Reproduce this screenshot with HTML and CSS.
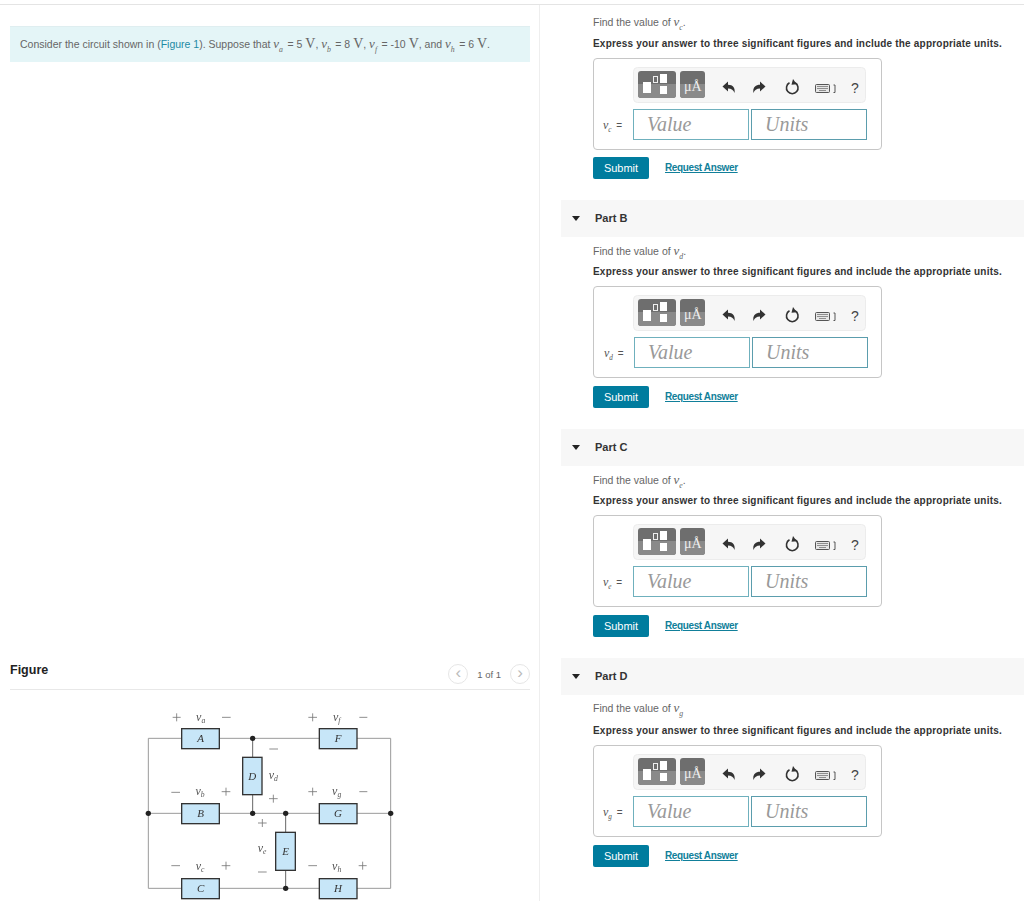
FILE: index.html
```html
<!DOCTYPE html>
<html lang="en">
<head>
<meta charset="utf-8">
<title>Circuit problem</title>
<link rel="stylesheet" href="styles.css">
</head>
<body>
<svg class="defs" width="0" height="0" aria-hidden="true">
  <symbol id="tools" viewBox="0 0 233 36">
    <rect x="0.5" y="0.5" width="232" height="35" rx="4" fill="#f6f6f6" stroke="#ececec"/>
    <rect x="5" y="4" width="38" height="27" rx="3" fill="#6e6e6e"/>
    <path d="M5 17h38v11a3 3 0 0 1-3 3H8a3 3 0 0 1-3-3z" fill="#8a8a8a"/>
    <rect x="10" y="15" width="8" height="11" fill="#fff"/>
    <rect x="20.500" y="9.500" width="4" height="6" fill="none" stroke="#eee"/>
    <rect x="27" y="7" width="7" height="9" fill="#fff"/>
    <rect x="27" y="19" width="7" height="8" fill="#fff"/>
    <rect x="47" y="4" width="25" height="27" rx="3" fill="#6e6e6e"/>
    <path d="M47 17h25v11a3 3 0 0 1-3 3H50a3 3 0 0 1-3-3z" fill="#8a8a8a"/>
    <path d="M89.500 19.500l5.500-5v3.200c5 0 7.500 3.300 6.500 8.300-1-3-3-4.500-6.500-4.500v3z" fill="#333"/>
    <path d="M132.500 19.500l-5.500-5v3.200c-5 0-7.500 3.300-6.500 8.300 1-3 3-4.500 6.500-4.500v3z" fill="#333"/>
    <path d="M156.500 15.800a5.800 5.800 0 1 0 5.500 0" fill="none" stroke="#333" stroke-width="1.600"/>
    <path d="M160 12l3.800 5.200-5.300.6z" fill="#333"/>
    <rect x="182.500" y="17.500" width="14" height="8" rx="1" fill="#e6e6e6" stroke="#555"/>
    <path d="M184 19.500h11M184 21.500h11M186 23.500h7" stroke="#777" stroke-width=".8"/>
    <path d="M200.500 18h1.500v7.500h-1.500" fill="none" stroke="#555"/>
  </symbol>
</svg>
<div class="page">
  <main class="left">
    <p class="intro">Consider the circuit shown in (<a href="#f">Figure 1</a>). Suppose that <i class="m">v<sub>a</sub></i> = 5 <span class="u">V</span>, <i class="m">v<sub>b</sub></i> = 8 <span class="u">V</span>, <i class="m">v<sub>f</sub></i> = -10 <span class="u">V</span>, and <i class="m">v<sub>h</sub></i> = 6 <span class="u">V</span>.</p>
    <div class="fig-head">
      <h2 id="f">Figure</h2>
      <div class="pager"><span class="round">&#8249;</span><span>1 of 1</span><span class="round">&#8250;</span></div>
    </div>
    <svg class="circuit" viewBox="0 0 840 603" role="img" aria-label="Circuit">
      <g fill="none" stroke="#9a9a9a" stroke-width="3">
        <path d="M155 115H55V565H155M268 115H568M681 115H782V565H681M55 340H155M268 340H568M681 340H782M268 565H568"/>
      </g>
      <path d="M368 115V172M368 284V340M467 340V397M467 511V565" stroke="#666" stroke-width="3"/>
      <g fill="#c7e6f8" stroke="#333" stroke-width="4">
        <rect x="155" y="86" width="113" height="60"/><rect x="568" y="86" width="113" height="60"/>
        <rect x="155" y="311" width="113" height="60"/><rect x="568" y="311" width="113" height="60"/>
        <rect x="155" y="536" width="113" height="60"/><rect x="568" y="536" width="113" height="60"/>
        <rect x="338" y="172" width="58" height="112"/><rect x="437" y="397" width="59" height="114"/>
      </g>
      <g fill="#222"><circle cx="368" cy="115" r="8"/><circle cx="55" cy="340" r="8"/><circle cx="368" cy="340" r="8"/><circle cx="467" cy="340" r="8"/><circle cx="782" cy="340" r="8"/><circle cx="467" cy="565" r="8"/></g>
      <g class="lbl" text-anchor="middle">
        <text x="212" y="127">A</text><text x="624" y="127">F</text><text x="212" y="352">B</text><text x="624" y="352">G</text><text x="212" y="577">C</text><text x="624" y="577">H</text><text x="367" y="240">D</text><text x="467" y="466">E</text>
      </g>
      <g class="vv" text-anchor="middle">
        <text x="212" y="62">v<tspan class="ss" dy="6">a</tspan></text><text x="620" y="62">v<tspan class="ss" dy="6">f</tspan></text>
        <text x="210" y="285">v<tspan class="ss" dy="6">b</tspan></text><text x="620" y="285">v<tspan class="ss" dy="6">g</tspan></text>
        <text x="210" y="510">v<tspan class="ss" dy="6">c</tspan></text><text x="620" y="510">v<tspan class="ss" dy="6">h</tspan></text>
        <text x="430" y="236">v<tspan class="ss" dy="6">d</tspan></text><text x="396" y="456">v<tspan class="ss" dy="6">e</tspan></text>
      </g>
      <g stroke="#777" stroke-width="2.500">
        <path d="M128 52h24M140 40v24M276 52h26M535 52h26M548 40v24M688 52h24M124 277h26M275 275h26M288 263v24M535 275h26M548 263v24M688 275h24M124 497h26M275 497h26M288 485v24M535 497h26M686 497h24M698 485v24M418 147h26M417 296h26M430 284v24M384 369h26M397 357v24M384 516h26"/>
      </g>
    </svg>
  </main>
  <section class="right">
    <div class="part first">
      <p class="find">Find the value of <i class="m">v<sub>c</sub></i>.</p>
      <p class="express">Express your answer to three significant figures and include the appropriate units.</p>
      <div class="box">
        <div class="toolbar"><svg class="tools"><use href="#tools"/></svg><span class="mu">&#956;&#197;</span><span class="help">?</span></div>
        <div class="answer"><label><i class="m">v<sub>c</sub></i> =</label><span class="field">Value</span><span class="field">Units</span></div>
      </div>
      <div class="actions"><button class="submit">Submit</button><a class="req" href="#r">Request Answer</a></div>
    </div>
    <div class="part part-b">
      <h3 class="part-head">Part B</h3>
      <p class="find">Find the value of <i class="m">v<sub>d</sub></i>.</p>
      <p class="express">Express your answer to three significant figures and include the appropriate units.</p>
      <div class="box">
        <div class="toolbar"><svg class="tools"><use href="#tools"/></svg><span class="mu">&#956;&#197;</span><span class="help">?</span></div>
        <div class="answer"><label><i class="m">v<sub>d</sub></i> =</label><span class="field">Value</span><span class="field">Units</span></div>
      </div>
      <div class="actions"><button class="submit">Submit</button><a class="req" href="#r">Request Answer</a></div>
    </div>
    <div class="part">
      <h3 class="part-head">Part C</h3>
      <p class="find">Find the value of <i class="m">v<sub>e</sub></i>.</p>
      <p class="express">Express your answer to three significant figures and include the appropriate units.</p>
      <div class="box">
        <div class="toolbar"><svg class="tools"><use href="#tools"/></svg><span class="mu">&#956;&#197;</span><span class="help">?</span></div>
        <div class="answer"><label><i class="m">v<sub>e</sub></i> =</label><span class="field">Value</span><span class="field">Units</span></div>
      </div>
      <div class="actions"><button class="submit">Submit</button><a class="req" href="#r">Request Answer</a></div>
    </div>
    <div class="part part-d">
      <h3 class="part-head">Part D</h3>
      <p class="find">Find the value of <i class="m">v<sub>g</sub></i></p>
      <p class="express">Express your answer to three significant figures and include the appropriate units.</p>
      <div class="box">
        <div class="toolbar"><svg class="tools"><use href="#tools"/></svg><span class="mu">&#956;&#197;</span><span class="help">?</span></div>
        <div class="answer"><label><i class="m">v<sub>g</sub></i> =</label><span class="field">Value</span><span class="field">Units</span></div>
      </div>
      <div class="actions"><button class="submit">Submit</button><a class="req" href="#r">Request Answer</a></div>
    </div>
  </section>
</div>
</body>
</html>
```
FILE: styles.css
```css
* { box-sizing: border-box; }
html, body { margin: 0; height: 901px; overflow: hidden; background: #fff; }
body { font-family: "Liberation Sans", Arial, sans-serif; font-size: 11px; color: #444; }
.defs { position: absolute; }
.page { display: flex; height: 897px; margin-top: 4px; border-top: 1px solid #e4e4e4; }
.left { width: 540px; flex: none; border-right: 1px solid #eee; padding: 21px 9px 0 10px; }
.intro { margin: 0; height: 36px; padding: 0 10px; white-space: nowrap; line-height: 34px; background: #e4f5f7; border-top: 1px solid #dfeef0; color: #666; font-size: 10.500px; }
.intro a { color: #1c8aa3; text-decoration: none; }
.m { font-family: "Liberation Serif", serif; font-style: italic; }
.intro .m { font-size: 13px; margin-right: 1.500px; }
sub { font-size: 60%; line-height: 0; }
.u { font-family: "Liberation Serif", serif; font-size: 14px; }
.fig-head { display: flex; justify-content: space-between; align-items: center; height: 37px; margin-top: 591px; border-bottom: 1px solid #e8e8e8; }
.fig-head h2 { margin: 0; font-size: 12.500px; color: #222; position: relative; top: -1px; }
.pager { display: flex; align-items: center; gap: 9px; font-size: 9.500px; color: #666; position: relative; top: 3px; }
.round { width: 20px; height: 20px; border-radius: 50%; border: 1px solid #e6e6e6; color: #bbb; font-size: 17px; line-height: 15px; text-align: center; }
.circuit { display: block; width: 280px; height: 201px; margin: 10px 0 0 120px; filter: blur(.3px); }
.lbl text { font: italic 33px "Liberation Serif", serif; fill: #333; }
.vv text { font: italic 36px "Liberation Serif", serif; fill: #555; }
.vv .ss { font-size: 23px; }
.right { flex: 1; padding-top: 9px; }
.part { height: 229px; padding-left: 53px; }
.part.first { height: 186px; }
.part.first .express { margin-top: 5px; }
.part-head { margin: 0 0 6px -32px; height: 37px; padding-left: 34px; background: #f7f7f7; font-size: 11px; line-height: 37px; color: #333; position: relative; }
.part-head::before { content: ""; position: absolute; left: 11px; top: 16px; border: 4.500px solid transparent; border-top: 5px solid #222; border-bottom: 0; }
.find { margin: 0; height: 17px; line-height: 15px; font-size: 10.500px; color: #666; }
.find .m { font-size: 13px; }
.express { margin: 4px 0 7px; height: 15px; line-height: 15px; font-size: 10px; font-weight: bold; color: #333; letter-spacing: .2px; white-space: nowrap; }
.box { width: 289px; height: 92px; border: 1px solid #c6c6c6; border-radius: 4px; padding: 8px 14px 0 39px; }
.toolbar { position: relative; width: 233px; height: 36px; }
.tools { width: 233px; height: 36px; display: block; }
.mu { position: absolute; left: 51px; top: 12px; font: 14px "Liberation Serif", serif; color: #eee; }
.help { position: absolute; left: 218px; top: 14px; font-size: 14px; color: #444; line-height: 14px; }
.answer { display: flex; margin-top: 6px; position: relative; gap: 2px; width: 234px; }
.answer label { position: absolute; left: -30px; top: 9px; color: #555; font-size: 10px; white-space: nowrap; word-spacing: 2px; }
.answer .m { font-size: 12px; }
.field { width: 116px; height: 31px; border: 1px solid #6fb0bd; padding-left: 13px; font: italic 20px/28px "Liberation Serif", serif; color: #999; }
.field + .field { border-color: #5b9dad; }
.part-b .answer { margin-left: 1px; }
.part-d .find { margin-top: -1px; margin-bottom: 1px; }
.part-d .express { margin-top: 6px; }
.actions { display: flex; align-items: center; gap: 16px; margin-top: 8px; }
.part.first .actions { margin-top: 7px; }
.submit { width: 56px; height: 22px; padding: 0; border: 0; border-radius: 2px; background: #007c9e; color: #fff; font: 11px "Liberation Sans", sans-serif; }
.req { color: #117f9a; font-size: 10px; font-weight: bold; letter-spacing: -.38px; margin-bottom: 2px; }
```
